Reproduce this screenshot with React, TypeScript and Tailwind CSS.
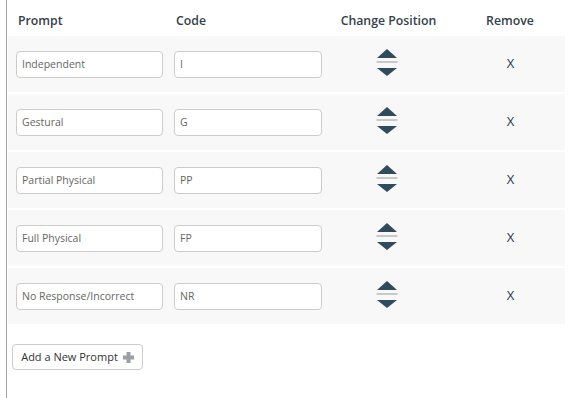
import React from "react";

const rows = [
  { prompt: "Independent", code: "I" },
  { prompt: "Gestural", code: "G" },
  { prompt: "Partial Physical", code: "PP" },
  { prompt: "Full Physical", code: "FP" },
  { prompt: "No Response/Incorrect", code: "NR" },
];

function Arrows() {
  return (
    <svg width="22" height="28" viewBox="0 0 22 28">
      <polygon points="11,0 21,9 1,9" fill="#2f4b5c" />
      <rect x="0.5" y="12" width="21" height="2" fill="#c9c9c9" />
      <polygon points="1,19 21,19 11,27" fill="#2f4b5c" />
    </svg>
  );
}

export default function App() {
  return (
    <div
      className="w-[581px] h-[398px] bg-white"
      style={{ fontFamily: "'Open Sans', sans-serif" }}
    >
      <div className="ml-[6px] h-[398px] border-l border-[#a3a3a3] pl-[1px] w-[568px]">
        <div className="flex h-[36px] items-center text-[12.3px] font-semibold text-[#343f4b] pt-[7px]">
          <div className="w-[158px] pl-[10px]">Prompt</div>
          <div className="w-[166px] pl-[10px]">Code</div>
          <div className="w-[116px] text-center pr-[3px]">Change Position</div>
          <div className="w-[118px] text-center pl-[6px]">Remove</div>
        </div>
        <div className="flex flex-col gap-[2px]">
          {rows.map((r) => (
            <div
              key={r.prompt}
              className="flex h-[56px] w-[557px] items-center bg-[#f8f8f8]"
            >
              <div className="w-[158px] pl-[8px]">
                <div className="h-[27px] w-[147px] rounded-[4px] border border-[#cccccc] bg-white pl-[5px] text-[10.5px] leading-[25px] text-[#666]">
                  {r.prompt}
                </div>
              </div>
              <div className="w-[166px] pl-[8px]">
                <div className="h-[27px] w-[148px] rounded-[4px] border border-[#cccccc] bg-white pl-[5px] text-[10.5px] leading-[25px] text-[#666]">
                  {r.code}
                </div>
              </div>
              <div className="flex w-[116px] justify-center pr-[7px] pb-[2px]">
                <Arrows />
              </div>
              <div className="flex w-[117px] justify-center pl-[8px] text-[13px] text-[#1f3852]">
                X
              </div>
            </div>
          ))}
        </div>
        <div className="pl-[4px] pt-[20px]">
          <button className="flex h-[26px] w-[131px] items-center justify-center gap-[5px] rounded-[4px] border border-[#cccccc] bg-white text-[11px] text-[#333]">
            <span>Add a New Prompt</span>
            <svg width="11" height="11" viewBox="0 0 11 11">
              <rect x="3.5" y="0" width="4" height="11" fill="#9aa0a6" />
              <rect x="0" y="3.5" width="11" height="4" fill="#9aa0a6" />
            </svg>
          </button>
        </div>
      </div>
    </div>
  );
}
